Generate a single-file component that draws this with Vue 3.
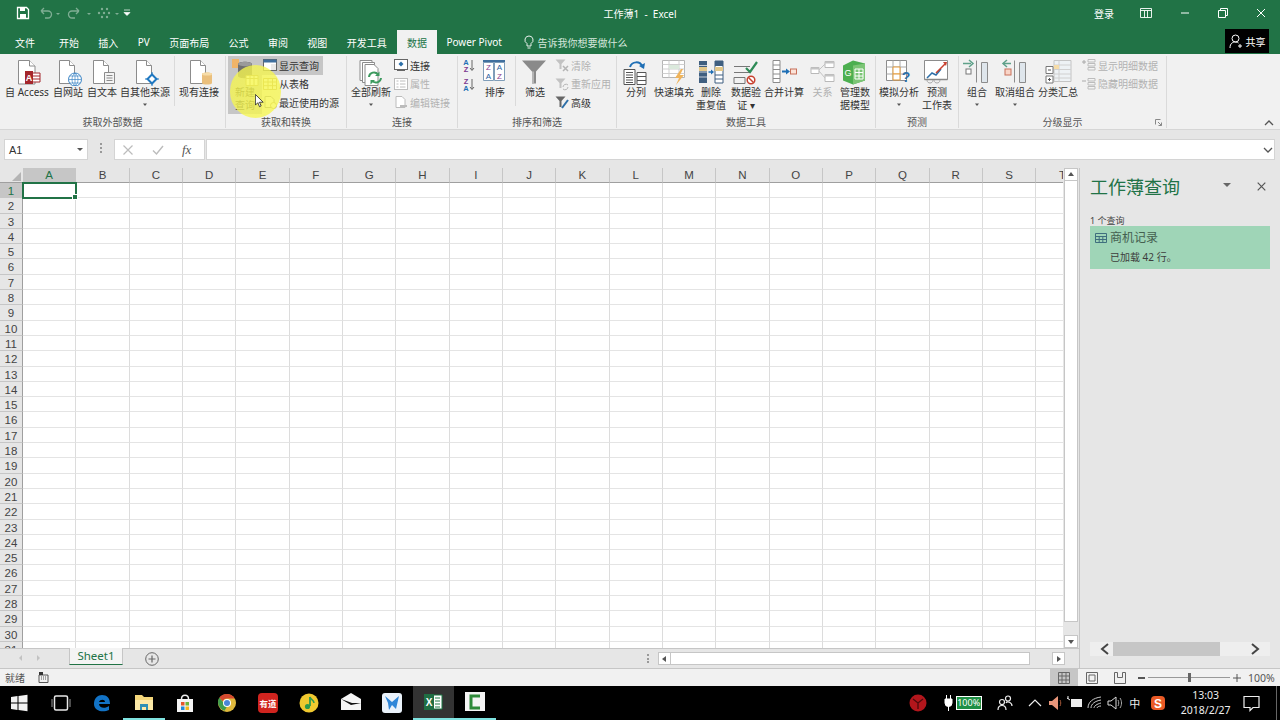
<script setup>
const doc = '<path d="M5.5 1.5h10l5 5v18h-15z" fill="#fff" stroke="#8c8c8c"/><path d="M15.5 1.5v5h5" fill="#fff" stroke="#8c8c8c"/>'

const icons = {
  access: '<path d="M5.500 1.500h11l5.500 5.500v18h-16.500z" fill="#fff" stroke="#8c8c8c"/><path d="M16.500 1.500v5.500h5.500" fill="#fff" stroke="#8c8c8c"/><rect x="12" y="12" width="8" height="13" fill="#a4262c"/><text x="16" y="22" font-size="9" font-weight="700" fill="#fff" text-anchor="middle" font-family="Liberation Sans">A</text><path d="M20 14h7v9h-7M20 17h7M20 20h7" fill="#fff" stroke="#a4262c"/>',
  web: doc + '<circle cx="21" cy="20.500" r="6.500" fill="#fff" stroke="#3f87c6"/><path d="M14.500 20.500h13M21 14v13M16 17h10M16 24h10M21 14c-4 3-4 10 0 13M21 14c4 3 4 10 0 13" fill="none" stroke="#3f87c6" stroke-width=".7"/>',
  text: doc + '<path d="M16.500 13.500h10v11h-10z" fill="#f4f4f4" stroke="#8c8c8c"/><path d="M18.500 16.500h6M18.500 19h6M18.500 21.500h6" stroke="#8c8c8c"/>',
  other: doc + '<path d="M21 13v14M14 20h14" stroke="#1f78c1"/><path d="M21 15.500l4.500 4.500-4.500 4.500-4.500-4.500z" fill="#fff" stroke="#1f78c1" stroke-width="2"/>',
  existing: doc + '<path d="M17 15c0-2 10-2 10 0v9c0 2-10 2-10 0z" fill="#eabf7c"/><ellipse cx="22" cy="15" rx="5" ry="1.500" fill="#f6dca8"/>',
  newquery: '<path d="M1 0h7v9h-7z" fill="#f0b468"/><path d="M7 5c0-3 14-3 14 0v12c0 3-14 3-14 0z" fill="#6f6f6f"/><ellipse cx="14" cy="5" rx="7" ry="2.200" fill="#9a9a9a"/><path d="M15 16.500h12v10h-12zM15 19.500h12M19 16.500v10M23 16.500v10" fill="#fff" stroke="#b5a76a"/>',
  refresh: '<path d="M3 1.500h12v20h-12z" fill="#fff" stroke="#8c8c8c"/><path d="M5.500 3.500h12v20h-12z" fill="#fff" stroke="#8c8c8c"/><path d="M8 5.500h9l4 4v17h-13z" fill="#fff" stroke="#8c8c8c"/><path d="M12 18a5 5 0 0 1 9-2.500M24 19a5 5 0 0 1-9 2.500" fill="none" stroke="#3d9a5f" stroke-width="2"/><path d="M22.500 12.500v4.500h-4.500zM13.500 25.500v-4.500h4.500z" fill="#3d9a5f"/>',
  sortbig: '<rect x="2" y="1" width="22" height="2.500" fill="#3f6f9e"/><path d="M2.500 3.500h10v18h-10zM13.500 3.500h10v18h-10z" fill="#fff" stroke="#7f9db8"/><g font-family="Liberation Sans" font-size="8" text-anchor="middle"><text x="7.500" y="11" fill="#8a3b8f">Z</text><text x="7.500" y="19.500" fill="#1f5f9e">A</text><text x="18.500" y="11" fill="#1f5f9e">A</text><text x="18.500" y="19.500" fill="#8a3b8f">Z</text></g>',
  filter: '<path d="M1 1.500h24l-10 11v12h-4v-12z" fill="#8a8a8a"/><path d="M11 12.500h2v12h-2z" fill="#b5b5b5"/>',
  split: '<path d="M2 10.500h11v15h-11z" fill="#fff" stroke="#555"/><path d="M4 13.500h7M4 16h7M4 18.500h7M4 21h7M4 23.500h7" stroke="#555"/><path d="M15 13.500h9v12h-9z" fill="#fff" stroke="#555"/><path d="M15 17.500h9M15 21.500h9" stroke="#555"/><path d="M8 8c2-6 10-6 12-1" fill="none" stroke="#1f6fb5" stroke-width="2"/><path d="M23 4l-1 6-5-3z" fill="#1f6fb5"/>',
  flash: '<path d="M2.500 1.500h22v17h-22z" fill="#fff" stroke="#b5b5b5"/><path d="M2.500 5.500h22M2.500 10h22M2.500 14.500h22M9 1.500v17M19 1.500v17" stroke="#cfcfcf"/><rect x="9" y="6" width="10" height="4" fill="#dbe9dc"/><path d="M21 10l-6 9h4l-3 7 8-10h-4l3-6z" fill="#efb45c"/>',
  dedupe: '<path d="M2 2h8v22h-8z" fill="#3f5f80"/><path d="M2 8h8v4h-8z" fill="#e3c88a"/><path d="M2 6.500h8M2 13h8M2 18h8" stroke="#fff" stroke-width=".7"/><path d="M18 2h8v22h-8z" fill="#fff" stroke="#3f5f80"/><path d="M18 2h8v5h-8z" fill="#3f5f80"/><path d="M18 8h8v4h-8z" fill="#e3c88a"/><path d="M18 16h8M18 20h8" stroke="#3f5f80"/><path d="M11.500 13h3" stroke="#1f6fb5" stroke-width="1.500"/><path d="M14 10.500l3 2.500-3 2.500z" fill="#1f6fb5"/>',
  validate: '<path d="M2 7.500h16M2 13.500h16" stroke="#777" fill="none"/><path d="M2 18.500h11v6h-11z" fill="none" stroke="#777"/><path d="M14 9l4 4 7-10" fill="none" stroke="#2e8b57" stroke-width="2.200"/><circle cx="19" cy="21" r="3.800" fill="#fff" stroke="#c8412f" stroke-width="1.500"/><path d="M16.500 18.500l5 5" stroke="#c8412f" stroke-width="1.500"/>',
  consolidate: '<path d="M3 1.500h7v22h-7zM3 6h7M3 10.500h7M3 15h7M3 19.500h7" fill="#fff" stroke="#8c8c8c"/><path d="M12 12.500h5" stroke="#1f6fb5" stroke-width="2"/><path d="M16 9.500l4 3-4 3z" fill="#1f6fb5"/><rect x="20.500" y="10" width="6" height="5" fill="#fbe3d8" stroke="#c8705a"/>',
  relation: '<path d="M2 8.500h8v6h-8zM16 2.500h9v6h-9zM16 15.500h9v7h-9z" fill="#fff" stroke="#b9b9b9"/><path d="M10 11l6-6M10 12l6 7" stroke="#c4c4c4"/><path d="M2 8.500h8v2h-8zM16 2.500h9v2h-9zM16 15.500h9v2h-9z" fill="#c4c4c4"/>',
  model: '<path d="M12 1.500l12 3v17l-12 4-10-4v-15z" fill="#4caf50"/><path d="M12 6.500l12-2v17l-12 4z" fill="#7cc576"/><path d="M14 10h8v10h-8zM14 13.500h8M14 17h8M18 10v10" fill="none" stroke="#fff"/><text x="7" y="17" font-size="9" fill="#fff" text-anchor="middle" font-family="Liberation Sans">G</text>',
  whatif: '<path d="M1.500 1.500h20v20h-20z" fill="#fff" stroke="#8c8c8c"/><path d="M8 1.500v20M15 1.500v20M1.500 8h20M1.500 15h20" stroke="#a8a8a8"/><path d="M8 8h7v7h-7z" fill="#fff" stroke="#e39a3a"/><path d="M8 15h7v6h-7z" fill="#fff" stroke="#e39a3a"/><text x="21" y="23" font-size="14" font-weight="700" fill="#2d6fa8" text-anchor="middle" font-family="Liberation Sans">?</text>',
  forecast: '<path d="M1.500 1.500h23v19h-23z" fill="#fff" stroke="#8c8c8c"/><path d="M1.500 20.500h23" stroke="#888" stroke-width="1.500"/><path d="M4 19l5-5 4 2 5-6" fill="none" stroke="#2d6fa8" stroke-width="1.500"/><path d="M13 14l5-5 4-4" fill="none" stroke="#c8412f" stroke-width="1.500"/><path d="M20 3l4 0-1 4z" fill="#c8412f"/><path d="M4 21c0 4 6 4 6 0M11 21c0 4 6 4 6 0" fill="none" stroke="#aaa"/>',
  group: '<path d="M0 4.500h8" stroke="#5fa18a" stroke-width="1.500"/><path d="M6 1l4 3.500-4 3.500" fill="none" stroke="#5fa18a" stroke-width="1.500"/><path d="M13.500 1.500v22M18.500 3.500h6v20h-6z" fill="#dfe6ec" stroke="#8c8c8c"/><rect x="3" y="10" width="5" height="5" fill="#fff" stroke="#777"/>',
  ungroup: '<path d="M2 4.500h8" stroke="#5fa18a" stroke-width="1.500"/><path d="M6 1l-4 3.500 4 3.500" fill="none" stroke="#5fa18a" stroke-width="1.500"/><path d="M13.500 1.500v22M18.500 3.500h6v20h-6z" fill="#dfe6ec" stroke="#8c8c8c"/><rect x="4" y="10" width="6" height="6" fill="#f9d5c8" stroke="#c8705a"/>',
  subtotal: '<path d="M10 1.500h17v21h-17z" fill="#eef2f5" stroke="#c4c4c4"/><path d="M10 6h17M10 10.500h17M10 15h17M10 19h17M15 1.500v21" stroke="#d0d0d0"/><path d="M10 6h5v4h-5z" fill="#f6dca8"/><path d="M2 7.500h7v7h-7zM2 17h7v7h-7z" fill="#fff" stroke="#777"/><path d="M4 11h3M4 20.500h3M5.500 19v3" stroke="#555"/>',

  showq: '<rect x=".5" y="1.500" width="13" height="11" fill="#fff" stroke="#666"/><rect x=".5" y="1.500" width="13" height="3" fill="#3f6f9e"/><rect x="8" y="6" width="5" height="6" fill="#e9e9e9"/>',
  table: '<path d="M.5 1.500h13v11h-13zM.5 5h13M.5 8.700h13M5 1.500v11M9.500 1.500v11" fill="#fff" stroke="#bda85f"/>',
  recent: '<path d="M2 1.500h6l3 3v8h-9z" fill="#fff" stroke="#8c8c8c"/><circle cx="10.500" cy="10.500" r="3" fill="#fff" stroke="#b9a55c"/>',
  conn: '<rect x=".5" y="1.500" width="13" height="10" fill="#fff" stroke="#666"/><path d="M3 12.500h8" stroke="#666"/><path d="M7 3.500l2.500 2.500-2.500 2.500-2.500-2.500z" fill="#2d6fa8"/>',
  prop: '<rect x=".5" y="1.500" width="13" height="11" fill="#fff" stroke="#bcbcbc"/><path d="M2.500 4h2M2.500 7h2M2.500 10h2M6 4h5.500M6 7h5.500M6 10h5.500" stroke="#bcbcbc"/>',
  links: '<path d="M2 1.500h6l3 3v8h-9z" fill="#fff" stroke="#bcbcbc"/><path d="M6 11h7" stroke="#bcbcbc" stroke-width="2"/>',
  az: '<g font-family="Liberation Sans" font-size="7.500" font-weight="700" text-anchor="middle"><text x="4" y="6.500" fill="#1f6fb5">A</text><text x="4" y="13.500" fill="#7c3a8f">Z</text></g><path d="M10 2v10M8 10l2 2.500 2-2.500" fill="none" stroke="#666"/>',
  za: '<g font-family="Liberation Sans" font-size="7.500" font-weight="700" text-anchor="middle"><text x="4" y="6.500" fill="#7c3a8f">Z</text><text x="4" y="13.500" fill="#1f6fb5">A</text></g><path d="M10 2v10M8 10l2 2.500 2-2.500" fill="none" stroke="#666"/>',
  clear: '<path d="M.5 1.500h10l-4 4.500v5h-2v-5z" fill="#c2c2c2"/><path d="M8 8l5 5M13 8l-5 5" stroke="#b4b4b4" stroke-width="1.500"/>',
  reapply: '<path d="M.5 1.500h10l-4 4.500v5h-2v-5z" fill="#c2c2c2"/><path d="M8 10a3 3 0 0 1 5 -2M13 10a3 3 0 0 1-5 2" fill="none" stroke="#b4b4b4"/>',
  adv: '<path d="M.5 1.500h10l-4 4.500v6h-2v-6z" fill="#666"/><path d="M7 13l6-8" stroke="#2d6fa8" stroke-width="2"/>',
  showd: '<path d="M0 4h4M2 2v4" stroke="#a9a9a9"/><path d="M6 1.500h7v2.500h-7zM6 5.500h7v2.500h-7zM6 9.500h7v2.500h-7z" fill="#f4f4f4" stroke="#bcbcbc"/>',
  hided: '<path d="M0 4h4" stroke="#a9a9a9"/><path d="M6 1.500h7v2.500h-7zM6 5.500h7v2.500h-7zM6 9.500h7v2.500h-7z" fill="#f4f4f4" stroke="#bcbcbc"/>',

  win: '<path d="M1 4l6.500-1v6.500h-6.500zM8.500 3l9-1.300v7.800h-9zM1 10.500h6.500v6.500l-6.500-1zM8.500 10.500h9v7.800l-9-1.300z" fill="#f2f2f2"/>',
  task: '<rect x="3.500" y="3" width="13" height="14" rx="1.500" fill="none" stroke="#e8e8e8" stroke-width="1.500"/><path d="M1 6v8M19 6v8" stroke="#999"/>',
  edge: '<path d="M2 11c0-6 4-9 8-9 5 0 8 3 8 9h-11c0 4 6 5 10 2v4c-6 3-15 1-15-6zm5-2h6c0-3-5-3-6 0z" fill="#1273c6"/>',
  folder: '<path d="M1 3h7l2 2h9v13h-18z" fill="#f4d67a"/><path d="M1 8h18v10h-18z" fill="#fbe9a8"/><path d="M6 12h8v6h-2v-3h-4v3h-2z" fill="#2c8fb5"/>',
  store: '<path d="M2 6h16v13h-16z" fill="#f4f4f4"/><path d="M6.500 6c0-5 7-5 7 0" fill="none" stroke="#eee" stroke-width="1.500"/><rect x="6" y="9" width="3.500" height="3.500" fill="#e5562b"/><rect x="10.500" y="9" width="3.500" height="3.500" fill="#6eb53b"/><rect x="6" y="13.500" width="3.500" height="3.500" fill="#1f88d9"/><rect x="10.500" y="13.500" width="3.500" height="3.500" fill="#f4b71e"/>',
  chrome: '<circle cx="10" cy="10" r="9" fill="#e0b93c"/><path d="M10 1a9 9 0 0 1 7.800 4.500h-7.800a4.500 4.500 0 0 0-4.200 3l-3.500-4a9 9 0 0 1 7.700-3.500z" fill="#d5492f"/><path d="M2.300 4.500a9 9 0 0 0 5.200 13.200l3.500-6-5.300-3z" fill="#3f9c4d"/><circle cx="10" cy="10" r="4" fill="#fff"/><circle cx="10" cy="10" r="3" fill="#4a86d8"/>',
  youdao: '<rect x="0" y="0" width="20" height="20" rx="4" fill="#d0241f"/><text x="10" y="13.500" font-size="8.500" font-weight="700" fill="#fff" text-anchor="middle" font-family="Noto Sans CJK SC">有道</text>',
  qq: '<circle cx="10" cy="10" r="9.500" fill="#f0c92f"/><path d="M11 4v9" stroke="#2e9a4e" stroke-width="1.800"/><circle cx="8.500" cy="13.500" r="2.600" fill="#2e9a4e"/><path d="M11 4c1 3 4 3 4 6" fill="none" stroke="#2e9a4e" stroke-width="1.500"/>',
  mail: '<path d="M0 6l10-6 10 6v11h-20z" fill="#f5f5f5"/><path d="M0 6l10 6 10-2-9 0z" fill="#111"/>',
  bird: '<rect x="0" y="0" width="20" height="20" rx="3" fill="#eaf2fa"/><path d="M3 3l7 6 7-6-3 13-4-4-3 5-1-7z" fill="#2f86d8"/>',
  excel: '<path d="M9 3h9v14h-9z" fill="#fff" stroke="#1f7a46"/><path d="M11 6h5M11 9h5M11 12h5M11 15h5" stroke="#1f7a46"/><rect x="0" y="2" width="10" height="16" fill="#1f6e43"/><text x="5" y="14" font-size="10" font-weight="700" fill="#fff" text-anchor="middle" font-family="Liberation Sans">X</text>',
  camtasia: '<rect x="0" y="0" width="20" height="19" fill="#f5f5f5"/><path d="M15 4h-9v12h9" fill="none" stroke="#2f8a3a" stroke-width="3"/>',

  redball: '<circle cx="10" cy="10" r="8.500" fill="#b3161c"/><path d="M5 6l5 4 5-4M10 10v6" stroke="#4d0a0c" stroke-width="1.300" fill="none"/>',
  people: '<circle cx="13" cy="5.500" r="2.500" fill="none" stroke="#eee" stroke-width="1.200"/><circle cx="7" cy="9" r="2.500" fill="none" stroke="#eee" stroke-width="1.200"/><path d="M3 17c0-6 8-6 8 0M11 10c1-2 6-1 6 3" fill="none" stroke="#eee" stroke-width="1.200"/>',
  caretup: '<path d="M4 13l6-6 6 6" fill="none" stroke="#eee" stroke-width="1.200"/>',
  redspeak: '<path d="M4 8h3l6-5v14l-6-5h-3z" fill="#e9967a"/><path d="M15 7c1 2 1 4 0 6" stroke="#a85a3a" fill="none"/>',
  batt: '<path d="M6 6h11v8h-11z" fill="#eee"/><path d="M2 5l3 2M3 3v3" stroke="#eee"/>',
  wifi: '<path d="M3 15c0-6 5-10 13-11M6 15c0-4 4-7 10-8M9 15c0-2 3-4 7-5M12 15c0-1 2-2 4-2" fill="none" stroke="#ccc"/>',
  vol: '<path d="M3 8h3l5-4v12l-5-4h-3z" fill="none" stroke="#ddd"/><path d="M13 7c1 2 1 4 0 6M15 5c2 3 2 7 0 10" stroke="#aaa" fill="none"/>',
  sogou: '<rect x="3" y="3" width="14" height="14" rx="4" fill="#ea5a26"/><text x="10" y="14.500" font-size="12" font-weight="700" fill="#fff" text-anchor="middle" font-family="Liberation Sans">S</text>',
  notify: '<path d="M3 3.500h15v11h-6l-3 3v-3h-6z" fill="none" stroke="#eee" stroke-width="1.200"/>',
}

const tabs = ['文件', '开始', '插入', 'PV', '页面布局', '公式', '审阅', '视图', '开发工具', '数据', 'Power Pivot']

const big = (w, icon, lines, extra = {}) => ({ type: 'big', w, icon, lines, ...extra })
const col = (w, rows, extra = {}) => ({ type: 'col', w, rows, ...extra })

const groups = [
  { label: '获取外部数据', w: 226, items: [
    big(48, 'access', ['自 Access'], { ml: 3 }),
    big(34, 'web', ['自网站']),
    big(34, 'text', ['自文本']),
    big(52, 'other', ['自其他来源'], { caret: true }),
    { type: 'sep', ml: 3 },
    big(48, 'existing', ['现有连接']),
  ] },
  { label: '获取和转换', w: 121, items: [
    big(34, 'newquery', ['新建', '查询'], { ml: 2, active: true }),
    col(82, [
      { icon: 'showq', text: '显示查询', active: true },
      { icon: 'table', text: '从表格' },
      { icon: 'recent', text: '最近使用的源' },
    ]),
  ] },
  { label: '连接', w: 111, items: [
    big(44, 'refresh', ['全部刷新'], { ml: 2, caret: true }),
    col(62, [
      { icon: 'conn', text: '连接' },
      { icon: 'prop', text: '属性', dim: true },
      { icon: 'links', text: '编辑链接', dim: true },
    ]),
  ] },
  { label: '排序和筛选', w: 159, items: [
    col(19, [{ icon: 'az' }, { icon: 'za' }, {}], { ml: 3 }),
    big(30, 'sortbig', ['排序']),
    { type: 'sep', ml: 5 },
    big(38, 'filter', ['筛选']),
    col(60, [
      { icon: 'clear', text: '清除', dim: true },
      { icon: 'reapply', text: '重新应用', dim: true },
      { icon: 'adv', text: '高级' },
    ]),
  ] },
  { label: '数据工具', w: 259, items: [
    big(38, 'split', ['分列']),
    big(38, 'flash', ['快速填充']),
    big(36, 'dedupe', ['删除', '重复值']),
    big(34, 'validate', ['数据验', '证 ▾']),
    big(42, 'consolidate', ['合并计算']),
    big(35, 'relation', ['关系'], { dim: true }),
    big(30, 'model', ['管理数', '据模型']),
  ] },
  { label: '预测', w: 83, items: [
    big(44, 'whatif', ['模拟分析'], { ml: 1, caret: true }),
    big(32, 'forecast', ['预测', '工作表']),
  ] },
  { label: '分级显示', w: 208, launcher: true, items: [
    big(36, 'group', ['组合'], { caret: true }),
    big(40, 'ungroup', ['取消组合'], { caret: true }),
    big(46, 'subtotal', ['分类汇总']),
    col(80, [
      { icon: 'showd', text: '显示明细数据', dim: true },
      { icon: 'hided', text: '隐藏明细数据', dim: true },
    ]),
  ] },
]

const columns = 'ABCDEFGHIJKLMNOPQRST'.split('')
const rows = Array.from({ length: 31 }, (_, i) => i + 1)

const taskApps = [
  { icon: 'win' }, { icon: 'task' }, { icon: 'edge' }, { icon: 'folder', open: true },
  { icon: 'store' }, { icon: 'chrome' }, { icon: 'youdao' }, { icon: 'qq' },
  { icon: 'mail' }, { icon: 'bird' }, { icon: 'excel', open: true, current: true }, { icon: 'camtasia', open: true },
]
</script>

<template>
  <div class="app">
    <!-- title bar -->
    <div class="titlebar">
      <div class="qat">
        <svg class="save" width="14" height="14" viewBox="0 0 14 14"><path d="M1.500 1.500h9l2 2v9h-11z" fill="none" stroke="#fff" stroke-width="1.300"/><path d="M4 2h5v3h-5zM4 8h6v4h-6z" fill="#fff"/></svg>
        <svg class="qat-i" width="28" height="14" viewBox="0 0 28 14"><path d="M3 5h7a3.500 3.500 0 0 1 0 7H7M3 5l3-3M3 5l3 3" fill="none" stroke="#7fae94" stroke-width="1.300"/><path d="M18 7l2 2 2-2z" fill="#7fae94"/></svg>
        <svg class="qat-i" width="28" height="14" viewBox="0 0 28 14"><path d="M12 5h-7a3.500 3.500 0 0 0 0 7h3M12 5l-3-3M12 5l-3 3" fill="none" stroke="#7fae94" stroke-width="1.300"/><path d="M20 7l2 2 2-2z" fill="#7fae94"/></svg>
        <svg class="qat-i" width="26" height="14" viewBox="0 0 26 14"><g fill="#7fae94"><circle cx="6" cy="3" r="1.200"/><circle cx="11" cy="3" r="1.200"/><circle cx="3" cy="7" r="1.200"/><circle cx="8" cy="7" r="1.200"/><circle cx="13" cy="7" r="1.200"/><circle cx="6" cy="11" r="1.200"/><circle cx="11" cy="11" r="1.200"/><path d="M19 7l2 2 2-2z"/></g></svg>
        <svg width="8" height="8" viewBox="0 0 8 8"><path d="M1 1h6M1 3.500h6l-3 3z" fill="#fff" stroke="#fff" stroke-width=".7"/></svg>
      </div>
      <div class="doc-title">工作薄1&nbsp; -&nbsp; Excel</div>
      <div class="win-ctl">
        <span class="login">登录</span>
        <svg width="12" height="10" viewBox="0 0 12 10"><path d="M.5.500h11v9h-11zM.5 2.500h11M4.500 2.500v7M7.500 2.500v7" fill="none" stroke="#fff" stroke-width=".9"/></svg>
        <svg width="10" height="10" viewBox="0 0 10 10"><path d="M1 5h8" stroke="#fff"/></svg>
        <svg width="10" height="10" viewBox="0 0 10 10"><path d="M.500 2.500h7v7h-7zM2.500 2.500v-2h7v7h-2" fill="none" stroke="#fff"/></svg>
        <svg width="10" height="10" viewBox="0 0 10 10"><path d="M1 1l8 8M9 1l-8 8" stroke="#fff"/></svg>
      </div>
    </div>

    <!-- tabs -->
    <div class="tabs">
      <span v-for="t in tabs" :key="t" class="tab" :class="{ active: t === '数据' }">{{ t }}</span>
      <span class="tell">
        <svg width="10" height="14" viewBox="0 0 10 14"><path d="M5 1a4 4 0 0 0-2 7.500v2.500h4v-2.500a4 4 0 0 0-2-7.500zM3.500 13h3" fill="none" stroke="#fff" stroke-width=".9"/></svg>
        告诉我你想要做什么
      </span>
      <span class="share">
        <svg width="15" height="15" viewBox="0 0 15 15"><circle cx="6.500" cy="4.500" r="3.500" fill="none" stroke="#fff"/><path d="M1 14c0-5 3-6 5.500-6 1.500 0 2.500.4 3 1M11 10v4M9 12h4" fill="none" stroke="#fff"/></svg>
        共享
      </span>
    </div>

    <!-- ribbon -->
    <div class="ribbon">
      <div v-for="g in groups" :key="g.label" class="group" :style="{ width: g.w + 'px' }">
        <div class="group-items">
          <template v-for="(it, i) in g.items" :key="i">
            <div v-if="it.type === 'sep'" class="vsep" :style="{ marginLeft: it.ml + 'px' }"></div>
            <div
              v-else-if="it.type === 'big'"
              class="big"
              :class="{ dim: it.dim, active: it.active }"
              :style="{ width: it.w + 'px', marginLeft: (it.ml || 0) + 'px' }"
            >
              <svg width="28" height="27" viewBox="0 0 28 27" v-html="icons[it.icon]"></svg>
              <span v-for="l in it.lines" :key="l" class="big-line">{{ l }}</span>
              <svg v-if="it.caret" class="caret" width="6" height="4" viewBox="0 0 6 4"><path d="M1 .500h4l-2 2.500z" fill="#555"/></svg>
            </div>
            <div v-else class="col" :style="{ width: it.w + 'px', marginLeft: (it.ml || 0) + 'px' }">
              <div v-for="(r, j) in it.rows" :key="j" class="small" :class="{ dim: r.dim, active: r.active }">
                <svg v-if="r.icon" width="14" height="14" viewBox="0 0 14 14" v-html="icons[r.icon]"></svg>
                <span v-if="r.text">{{ r.text }}</span>
              </div>
            </div>
          </template>
        </div>
        <div class="group-label">{{ g.label }}</div>
        <svg v-if="g.launcher" class="launcher" width="7" height="7" viewBox="0 0 7 7"><path d="M.5.500h5M.5.500v5M3 3l3.500 3.500M6.500 3.500v3h-3" fill="none" stroke="#888"/></svg>
      </div>
      <svg class="collapse" width="10" height="6" viewBox="0 0 10 6"><path d="M1 5l4-4 4 4" fill="none" stroke="#555" stroke-width="1.300"/></svg>
      <div class="spot"></div>
      <svg class="cursor" width="9" height="14" viewBox="0 0 11 17"><path d="M.5.500v13l3-3 2 5 2-1-2-4.500h4.500z" fill="#fff" stroke="#111" stroke-width=".9"/></svg>
    </div>

    <!-- formula bar -->
    <div class="formula">
      <div class="namebox"><span>A1</span><i class="tri"></i></div>
      <div class="dots"><b></b><b></b><b></b></div>
      <div class="fbtns">
        <svg width="12" height="12" viewBox="0 0 12 12"><path d="M1.500 1.500l9 9M10.500 1.500l-9 9" stroke="#bcbcbc" stroke-width="1.200"/></svg>
        <svg width="12" height="12" viewBox="0 0 12 12"><path d="M1 6.500l3.500 3.500 6.500-8" fill="none" stroke="#bcbcbc" stroke-width="1.400"/></svg>
        <span class="fx">fx</span>
      </div>
      <div class="finput"><svg width="10" height="6" viewBox="0 0 10 6"><path d="M1 1l4 4 4-4" fill="none" stroke="#555" stroke-width="1.300"/></svg></div>
    </div>

    <div class="main">
      <div class="sheet">
        <div class="grid-wrap">
          <div class="grid">
            <div class="hrow">
              <div class="corner"><i></i></div>
              <div v-for="c in columns" :key="c" class="chead" :class="{ sel: c === 'A' }">{{ c }}</div>
            </div>
            <div v-for="r in rows" :key="r" class="row">
              <div class="rhead" :class="{ sel: r === 1 }">{{ r }}</div>
              <div v-for="c in columns" :key="c" class="cell"></div>
            </div>
            <div class="selbox"><i></i></div>
          </div>
          <div class="vscroll">
            <div class="vbtn"><i class="up"></i></div>
            <div class="vthumb"></div>
            <div class="vbtn"><i class="down"></i></div>
          </div>
        </div>
        <div class="sheetbar">
          <i class="nav-l"></i><i class="nav-r"></i>
          <span class="stab">Sheet1</span>
          <span class="plus">
            <svg width="14" height="14" viewBox="0 0 14 14"><circle cx="7" cy="7" r="6.300" fill="none" stroke="#666"/><path d="M3.500 7h7M7 3.500v7" stroke="#666" stroke-width="1.200"/></svg>
          </span>
          <div class="dots small-dots"><b></b><b></b><b></b></div>
          <div class="hscroll">
            <div class="hbtn"><i class="left"></i></div>
            <div class="hthumb"></div>
            <div class="htrack"></div>
            <div class="hbtn"><i class="right"></i></div>
          </div>
        </div>
      </div>

      <aside class="pane">
        <div class="pane-head">
          <span class="pane-title">工作薄查询</span>
          <i class="pane-menu"></i>
          <svg width="9" height="9" viewBox="0 0 9 9"><path d="M.7.700l7.600 7.600M8.300.700l-7.600 7.600" stroke="#555" stroke-width="1.200"/></svg>
        </div>
        <div class="pane-count">1 个查询</div>
        <div class="qcard">
          <div class="qname">
            <svg width="12" height="10" viewBox="0 0 12 10"><path d="M.5.500h11v9h-11zM.5 3.500h11M4.200 3.500v6M7.800 3.500v6M.5 6.500h11" fill="none" stroke="#3f6f7e"/></svg>
            商机记录
          </div>
          <div class="qinfo">已加载 42 行。</div>
        </div>
        <div class="pane-scroll">
          <svg width="10" height="12" viewBox="0 0 10 12"><path d="M8 1l-6 5 6 5" fill="none" stroke="#444" stroke-width="2"/></svg>
          <div class="pane-thumb"></div>
          <svg width="10" height="12" viewBox="0 0 10 12"><path d="M2 1l6 5-6 5" fill="none" stroke="#444" stroke-width="2"/></svg>
        </div>
      </aside>
    </div>

    <!-- status bar -->
    <div class="status">
      <span class="ready">就绪</span>
      <svg width="11" height="11" viewBox="0 0 11 11"><path d="M1 3h9v7.500h-9z" fill="none" stroke="#555"/><path d="M3 5h1M5 5h1M7 5h1M3 7h1M5 7h1M7 7h1" stroke="#555"/><rect x="1" y="0" width="4" height="3" fill="#333"/></svg>
      <div class="status-right">
        <span class="view on"><svg width="12" height="12" viewBox="0 0 12 12"><path d="M.5.500h11v11h-11zM.5 4h11M.5 8h11M4 .5v11M8 .5v11" fill="none" stroke="#666"/></svg></span>
        <span class="view"><svg width="12" height="12" viewBox="0 0 12 12"><path d="M.5.500h11v11h-11zM3 3h6v6h-6z" fill="none" stroke="#666"/></svg></span>
        <span class="view"><svg width="12" height="12" viewBox="0 0 12 12"><path d="M.5.500h3v5h5v-5h3v11h-11z" fill="none" stroke="#666"/></svg></span>
        <div class="zoom">
          <i class="zminus"></i>
          <div class="zline"><i></i></div>
          <svg width="8" height="8" viewBox="0 0 8 8"><path d="M0 4h8M4 0v8" stroke="#555"/></svg>
        </div>
        <span class="zpct">100%</span>
      </div>
    </div>

    <!-- taskbar -->
    <div class="taskbar">
      <div
        v-for="a in taskApps"
        :key="a.icon"
        class="tapp"
        :class="{ open: a.open, current: a.current }"
      >
        <svg width="20" height="20" viewBox="0 0 20 20" v-html="icons[a.icon]"></svg>
      </div>
      <div class="tray">
        <svg class="t-red" width="20" height="20" viewBox="0 0 20 20" v-html="icons.redball"></svg>
        <div class="power">
          <svg width="9" height="16" viewBox="0 0 9 16"><path d="M2.500 0v4M6.500 0v4M1 4h7v4a3.500 3.500 0 0 1-7 0zM4.500 11v5" fill="#fff" stroke="#fff"/></svg>
          <span class="batt">100%</span>
        </div>
        <svg class="t-people" width="20" height="20" viewBox="0 0 20 20" v-html="icons.people"></svg>
        <svg class="t-i" width="20" height="20" viewBox="0 0 20 20" v-html="icons.caretup"></svg>
        <svg class="t-i" width="20" height="20" viewBox="0 0 20 20" v-html="icons.redspeak"></svg>
        <svg class="t-i" width="20" height="20" viewBox="0 0 20 20" v-html="icons.batt"></svg>
        <svg class="t-i" width="20" height="20" viewBox="0 0 20 20" v-html="icons.wifi"></svg>
        <svg class="t-i" width="20" height="20" viewBox="0 0 20 20" v-html="icons.vol"></svg>
        <span class="ime">中</span>
        <svg class="t-i" width="20" height="20" viewBox="0 0 20 20" v-html="icons.sogou"></svg>
        <div class="clock"><span>13:03</span><span>2018/2/27</span></div>
        <svg class="t-notify" width="20" height="20" viewBox="0 0 20 20" v-html="icons.notify"></svg>
        <i class="desk-edge"></i>
      </div>
    </div>
  </div>
</template>

<style scoped>
.app {
  width: 1280px;
  height: 720px;
  display: flex;
  flex-direction: column;
  overflow: hidden;
  position: relative;
  font-family: "Noto Sans", "Noto Sans CJK SC", sans-serif;
  font-size: 10px;
  color: #444;
  background: #f1f1f1;
}

/* title bar */
.titlebar {
  height: 30px;
  flex: none;
  background: #217346;
  color: #fff;
  display: flex;
  align-items: center;
  justify-content: center;
  position: relative;
  padding-bottom: 4px;
  box-sizing: border-box;
}
.qat {
  position: absolute;
  left: 16px;
  top: 6px;
  display: flex;
  align-items: center;
}
.save { margin-right: 8px; }
.qat-i { margin-right: 1px; }
.doc-title { font-size: 10px; }
.win-ctl {
  position: absolute;
  right: 0;
  top: 0;
  height: 26px;
  display: flex;
  align-items: center;
}
.win-ctl span, .win-ctl svg { flex: none; }
.login { margin-right: 26px; }
.win-ctl svg { margin-right: 28px; }
.win-ctl svg:last-child { margin-right: 14px; }

/* tabs */
.tabs {
  height: 24px;
  flex: none;
  background: #217346;
  display: flex;
  align-items: stretch;
  color: #fff;
  position: relative;
}
.tab {
  padding: 0 9.700px;
  display: flex;
  align-items: center;
  white-space: nowrap;
}
.tab:first-child { padding-left: 15px; padding-right: 14.300px; }
.tab.active {
  background: #f1f1f1;
  color: #217346;
  margin-left: 1px;
}
.tell {
  margin-left: 12px;
  display: flex;
  align-items: center;
  gap: 4px;
  color: #d5e6dc;
}
.share {
  position: absolute;
  left: 1225px;
  top: -1px;
  width: 44px;
  height: 24px;
  background: #000;
  display: flex;
  align-items: center;
  justify-content: center;
  gap: 2px;
}

/* ribbon */
.ribbon {
  height: 76px;
  flex: none;
  background: #f1f1f1;
  border-bottom: 1px solid #d6d6d6;
  box-sizing: border-box;
  display: flex;
  position: relative;
}
.group {
  position: relative;
  flex: none;
  box-sizing: border-box;
  border-right: 1px solid #dadada;
  margin: 2px 0 1px;
  display: flex;
  flex-direction: column;
}
.group-items {
  height: 58px;
  display: flex;
  flex: none;
}
.group-label {
  flex: 1;
  display: flex;
  align-items: center;
  justify-content: center;
  color: #555;
}
.launcher { position: absolute; right: 4px; bottom: 2px; }
.vsep { width: 1px; height: 50px; background: #dadada; flex: none; }
.big {
  flex: none;
  display: flex;
  flex-direction: column;
  align-items: center;
  line-height: 13px;
  padding-top: 3px;
  box-sizing: border-box;
  white-space: nowrap;
  color: #333;
}
.big.active { background: #c6c6c6; }
.big.dim, .small.dim { color: #b1b1b1; }
.big-line { display: block; }
.caret { margin-top: 4px; }
.col { flex: none; display: flex; flex-direction: column; }
.small {
  height: 18.500px;
  flex: none;
  display: flex;
  align-items: center;
  gap: 2px;
  padding-left: 1px;
  white-space: nowrap;
  color: #333;
}
.small.active { background: #c6c6c6; width: 60px; }
.collapse { position: absolute; right: 6px; bottom: 3px; }
.spot {
  position: absolute;
  left: 230px;
  top: 11px;
  width: 51px;
  height: 53px;
  border-radius: 50%;
  background: radial-gradient(circle, rgba(246, 246, 80, 0.82) 0, rgba(246, 246, 80, 0.78) 70%, rgba(246, 246, 80, 0.5) 100%);
}
.cursor { position: absolute; left: 255px; top: 40px; }

/* formula bar */
.formula {
  height: 38px;
  flex: none;
  background: #e6e6e6;
  display: flex;
  align-items: flex-start;
  padding: 9px 5px 0 4px;
  box-sizing: border-box;
}
.namebox, .fbtns, .finput {
  height: 21px;
  background: #fff;
  border: 1px solid #d4d4d4;
  box-sizing: border-box;
  display: flex;
  align-items: center;
}
.namebox {
  width: 84px;
  justify-content: space-between;
  padding: 0 4px;
  font-family: "Liberation Sans", sans-serif;
  font-size: 11px;
  color: #333;
}
.tri {
  border: 3px solid transparent;
  border-top: 3px solid #555;
  margin-top: 3px;
}
.dots { display: flex; flex-direction: column; gap: 2px; margin: 4px 12px 0 12px; }
.dots b { width: 2px; height: 2px; background: #999; display: block; }
.fbtns {
  width: 91px;
  margin-right: 1px;
  padding-left: 7px;
  gap: 18px;
}
.fx {
  font-family: "Liberation Serif", serif;
  font-style: italic;
  font-size: 13px;
  color: #555;
}
.finput {
  flex: 1;
  justify-content: flex-end;
  padding-right: 1px;
}

/* sheet */
.main { flex: 1; display: flex; min-height: 0; }
.sheet {
  width: 1080px;
  flex: none;
  display: flex;
  flex-direction: column;
  border-right: 1px solid #c6c6c6;
  box-sizing: border-box;
  background: #e6e6e6;
}
.grid-wrap { flex: 1; display: flex; min-height: 0; }
.grid {
  width: 1063px;
  flex: none;
  overflow: hidden;
  background: #fff;
  position: relative;
}
.hrow { display: flex; height: 15px; background: #e6e6e6; }
.corner {
  width: 23px;
  flex: none;
  border-bottom: 1px solid #9f9f9f;
  box-sizing: border-box;
  position: relative;
}
.corner i {
  position: absolute;
  right: 2px;
  bottom: 1px;
  border-left: 9px solid transparent;
  border-bottom: 9px solid #b4b4b4;
}
.chead {
  width: 53.330px;
  flex: none;
  box-sizing: border-box;
  border-right: 1px solid #c6c6c6;
  border-bottom: 1px solid #9f9f9f;
  text-align: center;
  font-family: "Liberation Sans", sans-serif;
  font-size: 11.500px;
  line-height: 15px;
  color: #444;
}
.chead.sel { background: #c6c6c6; color: #217346; border-bottom-color: #217346; }
.row { display: flex; height: 15.310px; }
.rhead {
  width: 23px;
  flex: none;
  box-sizing: border-box;
  background: #e6e6e6;
  border-right: 1px solid #9f9f9f;
  border-bottom: 1px solid #c6c6c6;
  text-align: center;
  font-family: "Liberation Sans", sans-serif;
  font-size: 11.500px;
  line-height: 17px;
  overflow: hidden;
  color: #444;
}
.rhead.sel { background: #c6c6c6; color: #217346; }
.cell {
  width: 53.330px;
  flex: none;
  box-sizing: border-box;
  border-right: 1px solid #dcdcdc;
  border-bottom: 1px solid #e4e4e4;
}
.selbox {
  position: absolute;
  left: 22px;
  top: 14px;
  width: 55px;
  height: 17px;
  box-sizing: border-box;
  border: 2px solid #217346;
}
.selbox i {
  position: absolute;
  right: -3px;
  bottom: -3px;
  width: 4px;
  height: 4px;
  background: #217346;
  border: 1px solid #fff;
}
.vscroll {
  flex: 1;
  display: flex;
  flex-direction: column;
  background: #e6e6e6;
  padding: 0 1px;
}
.vbtn {
  height: 13px;
  background: #fff;
  border: 1px solid #c6c6c6;
  box-sizing: border-box;
  display: flex;
  align-items: center;
  justify-content: center;
  flex: none;
}
.vbtn .up { border: 3.500px solid transparent; border-bottom: 4px solid #555; margin-bottom: 4px; }
.vbtn .down { border: 3.500px solid transparent; border-top: 4px solid #555; margin-top: 4px; }
.vthumb {
  height: 441px;
  flex: none;
  background: #fff;
  border: 1px solid #c6c6c6;
  border-top: 0;
  box-sizing: border-box;
  margin-bottom: auto;
}

/* sheet tabs */
.sheetbar {
  height: 20px;
  flex: none;
  display: flex;
  align-items: center;
  position: relative;
  border-top: 1px solid #c6c6c6;
  box-sizing: border-box;
}
.nav-l, .nav-r { border: 3px solid transparent; position: absolute; top: 6px; }
.nav-l { left: 16px; border-right: 3px solid #c2c2c2; }
.nav-r { left: 37px; border-left: 3px solid #c2c2c2; }
.stab {
  margin-left: 69px;
  width: 54px;
  height: 17px;
  margin-top: -4px;
  background: #f4f4f4;
  border-bottom: 1px solid #217346;
  border-left: 1px solid #c6c6c6;
  border-right: 1px solid #c6c6c6;
  box-sizing: border-box;
  text-align: center;
  color: #217346;
  font-size: 11.500px;
  line-height: 15px;
}
.plus { margin-left: 22px; display: flex; }
.small-dots { margin: 0 0 0 488px; gap: 1.500px; }
.hscroll {
  margin-left: 9px;
  width: 407px;
  height: 13px;
  display: flex;
  align-items: stretch;
}
.hbtn {
  width: 13px;
  background: #fff;
  border: 1px solid #c6c6c6;
  box-sizing: border-box;
  display: flex;
  align-items: center;
  justify-content: center;
  flex: none;
}
.hbtn .left { border: 3.500px solid transparent; border-right: 4px solid #555; margin-right: 4px; }
.hbtn .right { border: 3.500px solid transparent; border-left: 4px solid #555; margin-left: 4px; }
.hthumb { width: 359px; background: #fff; border: 1px solid #c6c6c6; border-left: 0; box-sizing: border-box; flex: none; }
.htrack { flex: 1; }

/* queries pane */
.pane {
  flex: 1;
  background: #e6e6e6;
  padding: 0 10px 12px;
  display: flex;
  flex-direction: column;
}
.pane-head {
  height: 36px;
  display: flex;
  align-items: center;
  flex: none;
  padding-right: 4px;
}
.pane-title {
  font-size: 18px;
  color: #217346;
  margin-right: auto;
}
.pane-menu {
  border: 4px solid transparent;
  border-top: 4px solid #666;
  margin: 2px 26px 0 0;
}
.pane-count {
  margin-top: 11px;
  font-size: 9px;
  line-height: 11px;
  color: #444;
  flex: none;
}
.qcard {
  height: 43px;
  background: #9fd5b7;
  flex: none;
  color: #3d3d3d;
}
.qname {
  font-size: 12px;
  line-height: 17px;
  padding: 3px 0 0 5px;
  display: flex;
  align-items: center;
  gap: 3px;
  color: #44604f;
}
.qinfo {
  padding: 4px 0 0 20px;
  font-size: 10px;
  line-height: 14px;
}
.pane-scroll {
  margin-top: auto;
  height: 14px;
  background: #eeeeee;
  display: flex;
  align-items: center;
  padding: 0 10px;
  flex: none;
}
.pane-thumb {
  width: 107px;
  height: 14px;
  background: #c6c6c6;
  margin: 0 auto 0 3px;
}

/* status bar */
.status {
  height: 18px;
  flex: none;
  background: #f1f1f1;
  border-top: 1px solid #c6c6c6;
  box-sizing: border-box;
  display: flex;
  align-items: center;
  padding-left: 5px;
  color: #555;
}
.ready { width: 33px; }
.status-right {
  margin-left: auto;
  display: flex;
  align-items: center;
  height: 100%;
}
.view {
  width: 28px;
  height: 100%;
  display: flex;
  align-items: center;
  justify-content: center;
}
.view.on { background: #c6c6c6; }
.zoom {
  display: flex;
  align-items: center;
  margin-left: 4px;
  gap: 3px;
}
.zminus { width: 7px; height: 2px; background: #555; }
.zline { width: 82px; height: 1px; background: #999; position: relative; }
.zline i {
  position: absolute;
  left: 40px;
  top: -4px;
  width: 3px;
  height: 9px;
  background: #666;
}
.zpct { margin-left: 7px; width: 32px; font-size: 10.500px; }

/* taskbar */
.taskbar {
  height: 34px;
  flex: none;
  background: #000;
  display: flex;
  color: #eee;
}
.tapp {
  width: 41.400px;
  height: 34px;
  display: flex;
  align-items: center;
  justify-content: center;
  box-sizing: border-box;
  flex: none;
}
.tapp:first-child { margin-left: -1px; }
.tapp.open { border-bottom: 2px solid #7fe3e0; }
.tapp.current { background: #333; }
.tray {
  flex: 1;
  display: flex;
  align-items: center;
  position: relative;
}
.tray svg { flex: none; }
.t-red { margin-left: 412px; }
.power {
  display: flex;
  align-items: center;
  gap: 3px;
  margin-left: 16px;
}
.batt {
  width: 26px;
  height: 14px;
  background: #1f8f45;
  border: 1px solid #fff;
  box-sizing: border-box;
  font-size: 9px;
  line-height: 12px;
  text-align: center;
  color: #fff;
}
.t-people { margin-left: 13px; }
.t-people + .t-i { margin-left: 10px; }
.ime { width: 20px; margin-right: 3px; text-align: center; font-size: 11px; }
.clock {
  width: 60px;
  margin-left: 8px;
  display: flex;
  flex-direction: column;
  align-items: center;
  font-size: 10.500px;
  line-height: 15px;
}
.t-notify { margin-left: 5px; }
.desk-edge {
  position: absolute;
  right: 3px;
  top: 0;
  width: 1px;
  height: 34px;
  background: #666;
}
</style>

<style>
html, body { margin: 0; }
</style>
